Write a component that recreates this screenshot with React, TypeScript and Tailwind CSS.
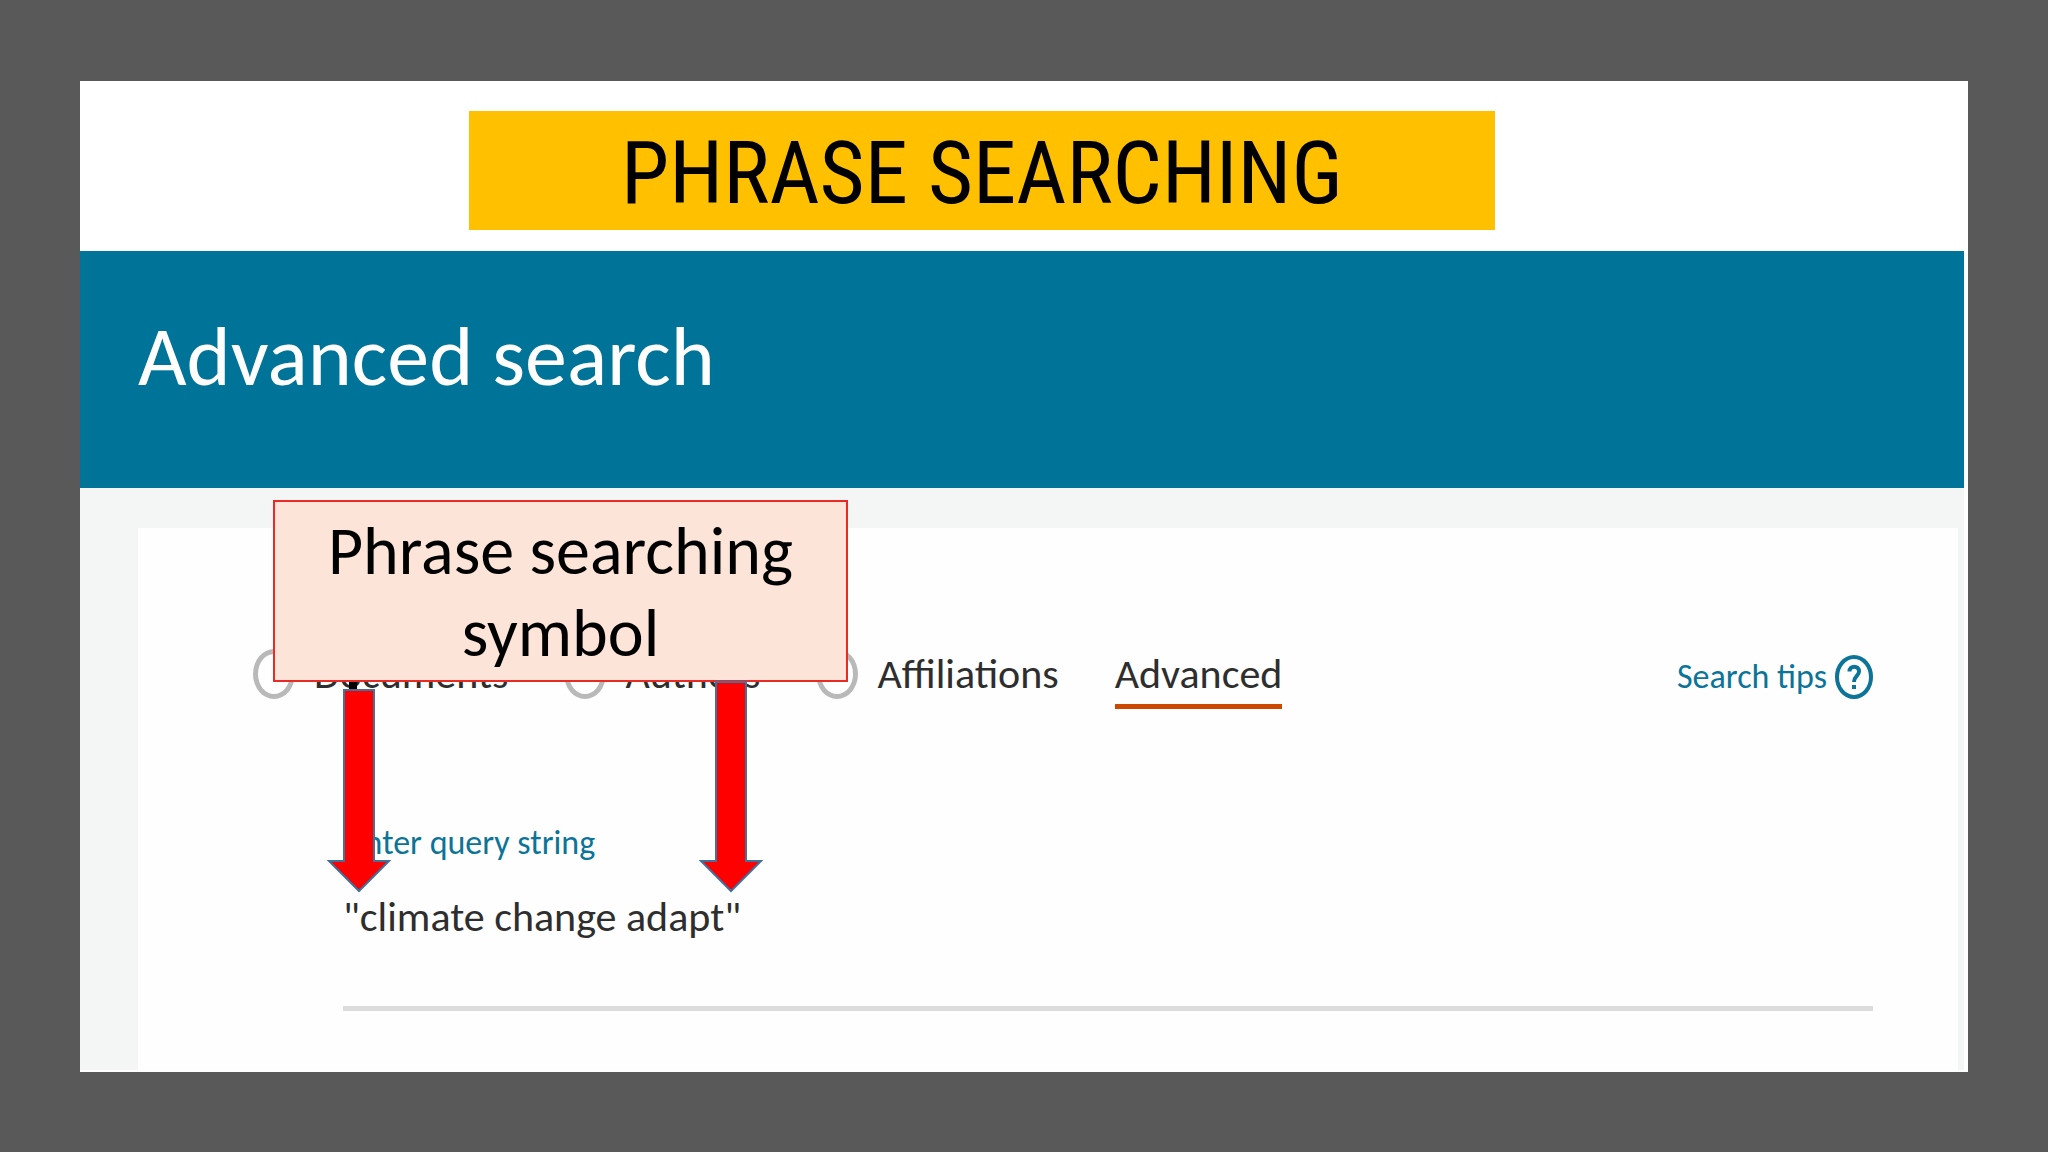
const searchTypes = ["Documents", "Authors", "Affiliations"];

function DownArrow({ height }: { height: number }) {
  const shaft = height - 32;
  return (
    <svg width="66" height={height} viewBox={`0 0 66 ${height}`} aria-hidden="true">
      <path
        d={`M18 1H48V${shaft}H63L33 ${height - 2}L3 ${shaft}H18Z`}
        fill="#ff0000"
        stroke="#41719c"
        strokeWidth="2"
      />
    </svg>
  );
}

function HelpIcon() {
  return (
    <svg width="38" height="44" viewBox="0 0 38 44" fill="none" stroke="#0b7498" aria-hidden="true">
      <ellipse cx="19" cy="22" rx="17" ry="20" strokeWidth="4" />
      <path d="M14.500 16.500C14.500 10 24 10 24 16.500C24 21 19 21 19 27" strokeWidth="4" />
      <path d="M19 30V34" strokeWidth="4" />
    </svg>
  );
}

export default function App() {
  return (
    <div className="flex min-h-screen flex-col bg-[#595959] px-20 pt-[81px] pb-20 font-[Carlito,Lato,sans-serif]">
      <main className="relative flex flex-1 flex-col bg-white">
        <div className="flex pt-[30px] pr-[473px] pb-[21px] pl-[389px]">
          <h1 className="flex-1 bg-[#ffc000] pt-3 pb-[7px] text-center font-['Roboto_Condensed','Liberation_Sans',sans-serif] text-[87px] leading-[100px] whitespace-nowrap text-black">
            PHRASE SEARCHING
          </h1>
        </div>

        <div className="mr-1 mb-[2px] flex flex-1 flex-col bg-[#f4f5f5]">
          <header className="bg-[#007398] pt-14 pb-[81px] pl-[58px]">
            <h2 className="text-[84px] leading-[100px] text-white">Advanced search</h2>
          </header>

          <form className="mt-10 mr-[6px] ml-[58px] flex-1 bg-[#fefefe] pt-[121px] pr-[85px] pl-[115px]">
            <div className="flex items-start gap-14 text-[42px] leading-[50px] text-[#2e2e2e]">
              {searchTypes.map((t) => (
                <label key={t} className="flex items-center gap-[19px]">
                  <input
                    type="radio"
                    name="searchType"
                    className="h-[50px] w-[42px] appearance-none rounded-[50%] border-5 border-[#b9b9b9] bg-white"
                  />
                  {t}
                </label>
              ))}
              <button type="button" className="border-b-5 border-[#cc4a00] pb-[5px]">
                Advanced
              </button>
              <a href="#tips" className="mt-[3px] ml-auto flex items-center gap-2 text-[34px] text-[#0b7498]">
                Search tips
                <HelpIcon />
              </a>
            </div>

            <div className="mt-[114px] ml-[90px] flex flex-col">
              <label htmlFor="query" className="pl-[5px] text-[34px] leading-10 text-[#0b7498]">
                Enter query string
              </label>
              <input
                id="query"
                type="text"
                defaultValue={'"climate change adapt"'}
                className="mt-7 h-[120px] w-full border-b-5 border-[#dcdcdc] bg-transparent pb-[65px] text-[42px] leading-[50px] text-[#2e2e2e] outline-none"
              />
            </div>
          </form>
        </div>

        <div className="absolute top-[600px] left-[269px] h-2 w-2 bg-black" />
        <div className="absolute top-[608px] left-[246px]">
          <DownArrow height={204} />
        </div>
        <aside className="absolute top-[419px] left-[193px] flex w-[575px] items-center justify-center border-2 border-[#ea2a24] bg-[#fde4d8] px-8 pt-2 pb-[6px] text-center text-[68px] leading-[82px] text-black">
          Phrase searching symbol
        </aside>
        <div className="absolute top-[600px] left-[618px]">
          <DownArrow height={212} />
        </div>
      </main>
    </div>
  );
}
